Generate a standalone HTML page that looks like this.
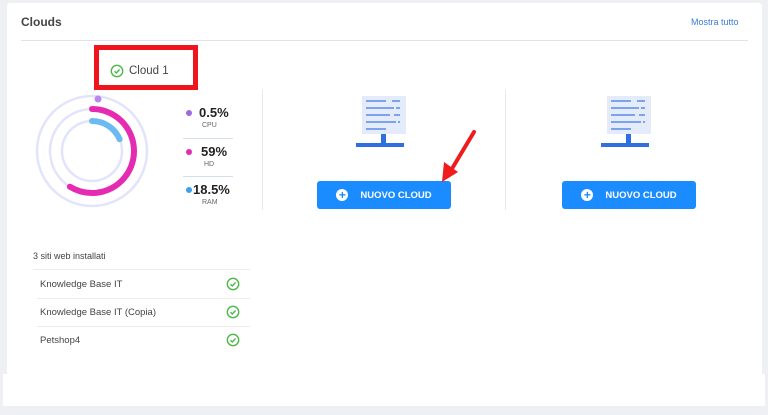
<!DOCTYPE html>
<html><head><meta charset="utf-8"><style>
*{margin:0;padding:0;box-sizing:border-box}
body{width:768px;height:415px;background:#eef0f3;font-family:"Liberation Sans",sans-serif;position:relative;overflow:hidden;color:#333}
.a{position:absolute}
.card{left:7px;top:3px;width:755px;height:372px;background:#fff;border-radius:3px}
.bar{left:3px;top:374px;width:762px;height:32px;background:#fff}
.btn{height:28px;width:134px;background:#1a8cff;border-radius:3px;color:#fff;font-size:9.5px;font-weight:bold;display:flex;align-items:center;justify-content:center;gap:12px}
.plus{width:12px;height:12px;border-radius:50%;background:#fff;color:#1a8cff;font-size:12px;line-height:12px;text-align:center;font-weight:bold}
.sv{font-size:13px;font-weight:bold;color:#222}
.sl{font-size:7px;color:#666}
.row{font-size:9.5px;color:#444}
</style></head><body>
<div class="a card"></div>
<div class="a bar"></div>
<div class="a" style="left:21px;top:15px;font-size:12px;font-weight:bold;color:#444">Clouds</div>
<div class="a" style="left:691px;top:17px;font-size:9px;color:#3a7bd5">Mostra tutto</div>
<div class="a" style="left:21px;top:40px;width:727px;height:1px;background:#e3e3e3"></div>
<div class="a" style="left:94px;top:45px;width:104px;height:45px;border:5px solid #f0141c"></div>
<svg class="a" style="left:110px;top:64px" width="14" height="14" viewBox="0 0 14 14"><circle cx="7" cy="7" r="5.7" fill="none" stroke="#4cb848" stroke-width="1.4"/><path d="M4.5 7.2l1.8 1.8 3.3-3.5" fill="none" stroke="#4cb848" stroke-width="1.4"/></svg>
<div class="a" style="left:129px;top:65px;font-size:11.5px;color:#444">Cloud 1</div>
<svg class="a" style="left:34px;top:93px" width="116" height="116" viewBox="0 0 116 116">
<circle cx="58" cy="58" r="55" fill="none" stroke="#e2e4fb" stroke-width="2.5"/>
<circle cx="58" cy="58" r="42" fill="none" stroke="#e2e4fb" stroke-width="2.5"/>
<circle cx="58" cy="58" r="30" fill="none" stroke="#e2e4fb" stroke-width="2.5"/>
<circle cx="64" cy="6" r="3.5" fill="#b889ea"/>
<circle cx="58" cy="58" r="42" fill="none" stroke="#e52bb1" stroke-width="6" stroke-linecap="round" stroke-dasharray="155 400" transform="rotate(-90 58 58)"/>
<circle cx="58" cy="58" r="30" fill="none" stroke="#6cbaf2" stroke-width="6" stroke-linecap="round" stroke-dasharray="35 400" transform="rotate(-90 58 58)"/>
</svg>
<div class="a" style="left:186px;top:110px;width:6px;height:6px;border-radius:50%;background:#9d6be0"></div>
<div class="a sv" style="left:199px;top:105px">0.5%</div>
<div class="a sl" style="left:202px;top:122px">CPU</div>
<div class="a" style="left:183px;top:138px;width:50px;height:1px;background:#d5dfec"></div>
<div class="a" style="left:186px;top:149px;width:6px;height:6px;border-radius:50%;background:#e52bb1"></div>
<div class="a sv" style="left:201px;top:144px">59%</div>
<div class="a sl" style="left:204px;top:161px">HD</div>
<div class="a" style="left:183px;top:176px;width:50px;height:1px;background:#d5dfec"></div>
<div class="a" style="left:186px;top:187px;width:6px;height:6px;border-radius:50%;background:#3aa0f0"></div>
<div class="a sv" style="left:193px;top:182px">18.5%</div>
<div class="a sl" style="left:202px;top:199px">RAM</div>
<div class="a" style="left:262px;top:90px;width:1px;height:120px;background:#e8e8e8"></div>
<div class="a" style="left:505px;top:90px;width:1px;height:120px;background:#e8e8e8"></div>
<svg class="a" style="left:356px;top:96px" width="56" height="54" viewBox="0 0 56 54">
<rect x="6" y="0" width="44" height="38" fill="#e4ebfb"/>
<g stroke="#5a8be8" stroke-width="1.5"><path d="M10 5h20M36 5h8M10 12h28M40 12h4M10 19h24M38 19h6M10 26h30M42 26h2M10 33h20"/></g>
<rect x="25" y="38" width="5" height="12" fill="#2f6fe0"/><rect x="0" y="47" width="48" height="4" fill="#2f6fe0"/></svg>
<svg class="a" style="left:601px;top:96px" width="56" height="54" viewBox="0 0 56 54">
<rect x="6" y="0" width="44" height="38" fill="#e4ebfb"/>
<g stroke="#5a8be8" stroke-width="1.5"><path d="M10 5h20M36 5h8M10 12h28M40 12h4M10 19h24M38 19h6M10 26h30M42 26h2M10 33h20"/></g>
<rect x="25" y="38" width="5" height="12" fill="#2f6fe0"/><rect x="0" y="47" width="48" height="4" fill="#2f6fe0"/></svg>
<div class="a btn" style="left:317px;top:181px"><span class="plus">+</span>NUOVO CLOUD</div>
<div class="a btn" style="left:562px;top:181px"><span class="plus">+</span>NUOVO CLOUD</div>
<svg class="a" style="left:438px;top:128px" width="42" height="58" viewBox="0 0 42 58"><path d="M36 4L12 44" stroke="#ee1c1c" stroke-width="4" stroke-linecap="round"/><path d="M4 54L6 34 20 44z" fill="#ee1c1c"/></svg>
<div class="a" style="left:33px;top:251px;font-size:9px;color:#444">3 siti web installati</div>
<div class="a" style="left:33px;top:269px;width:217px;height:1px;background:#ececec"></div>
<div class="a row" style="left:40px;top:279px">Knowledge Base IT</div>
<div class="a" style="left:37px;top:298px;width:213px;height:1px;background:#ececec"></div>
<div class="a row" style="left:40px;top:307px">Knowledge Base IT (Copia)</div>
<div class="a" style="left:37px;top:326px;width:213px;height:1px;background:#ececec"></div>
<div class="a row" style="left:40px;top:335px">Petshop4</div>
<svg class="a" style="left:226px;top:277px" width="14" height="70" viewBox="0 0 14 70"><g fill="none" stroke="#4cb848" stroke-width="1.4"><circle cx="7" cy="7" r="5.7"/><path d="M4.5 7.2l1.8 1.8 3.3-3.5"/><circle cx="7" cy="35" r="5.7"/><path d="M4.5 35.2l1.8 1.8 3.3-3.5"/><circle cx="7" cy="63" r="5.7"/><path d="M4.5 63.2l1.8 1.8 3.3-3.5"/></g></svg>
</body></html>
